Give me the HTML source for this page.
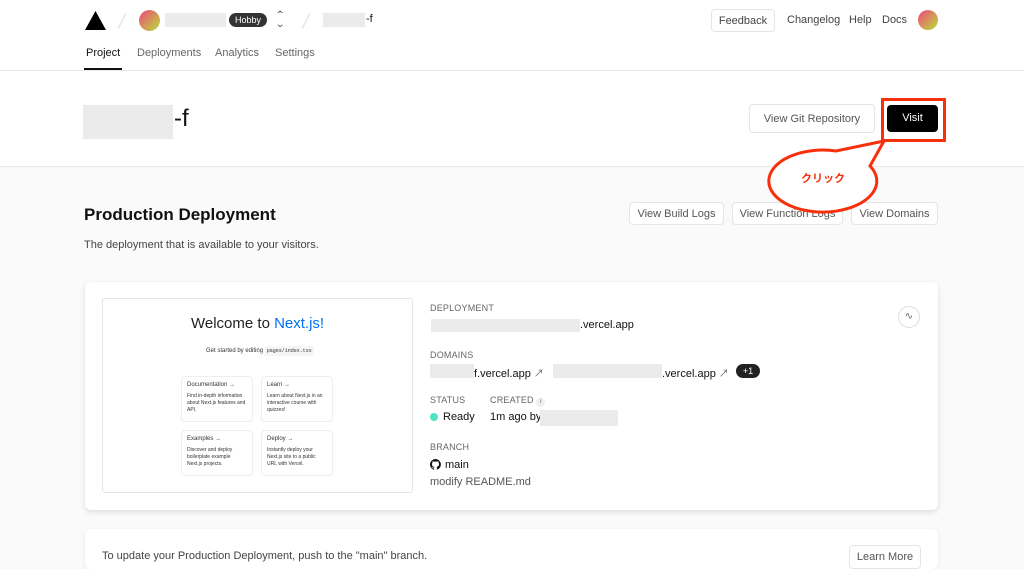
<!DOCTYPE html>
<html><head><meta charset="utf-8"><style>
*{box-sizing:border-box;margin:0;padding:0}
body{width:1024px;height:559px;overflow:hidden;background:#fafafa;font-family:"Liberation Sans","Noto Sans CJK JP",sans-serif;color:#111;position:relative}
.a{position:absolute}
.g{background:#ebebeb;position:absolute}
.btn{position:absolute;background:#fff;border:1px solid #e5e5e5;border-radius:4px;font-size:11px;color:#555;display:flex;align-items:center;justify-content:center}
.lab{position:absolute;font-size:9px;color:#666;letter-spacing:.2px}
.v{position:absolute;font-size:11px;color:#111}
.pc{position:absolute;border:1px solid #eee;border-radius:4px;font-size:5px;color:#333;padding:5px;line-height:7px}
.pc b{display:block;font-weight:normal;font-size:6px;margin-bottom:4px}
</style></head><body>
<div class="a" style="left:0;top:0;width:1024px;height:167px;background:#fff;border-bottom:1px solid #eaeaea"></div>
<div class="a" style="left:0;top:70px;width:1024px;height:1px;background:#eaeaea"></div>
<svg class="a" style="left:85px;top:11px" width="21" height="19"><polygon points="10.5,0 21,19 0,19" fill="#000"/></svg>
<svg class="a" style="left:116px;top:12px" width="12" height="18"><line x1="10" y1="1" x2="2" y2="17" stroke="#ddd"/></svg>
<div class="a" style="left:139px;top:10px;width:21px;height:21px;border-radius:50%;background:linear-gradient(135deg,#f0467c,#b8e03a)"></div>
<div class="g" style="left:165px;top:13px;width:61px;height:14px"></div>
<div class="a" style="left:229px;top:13px;width:38px;height:14px;border-radius:7px;background:#333;color:#fff;font-size:9px;text-align:center;line-height:14px">Hobby</div>
<div class="a" style="left:276px;top:11px;font-size:10px;color:#555;line-height:9px;transform:scaleX(1.2)">⌃<br>⌄</div>
<svg class="a" style="left:300px;top:12px" width="12" height="18"><line x1="10" y1="1" x2="2" y2="17" stroke="#ddd"/></svg>
<div class="g" style="left:323px;top:13px;width:42px;height:14px"></div>
<div class="a" style="left:366px;top:13px;font-size:11px">-f</div>
<div class="btn" style="left:711px;top:9px;width:64px;height:23px;color:#444">Feedback</div>
<div class="a" style="left:787px;top:14px;font-size:11px;color:#444">Changelog</div>
<div class="a" style="left:849px;top:14px;font-size:11px;color:#444">Help</div>
<div class="a" style="left:882px;top:14px;font-size:11px;color:#444">Docs</div>
<div class="a" style="left:918px;top:10px;width:20px;height:20px;border-radius:50%;background:linear-gradient(135deg,#f0467c,#b8e03a)"></div>
<div class="a" style="left:86px;top:47px;font-size:11px;color:#111">Project</div>
<div class="a" style="left:84px;top:68px;width:38px;height:2px;background:#111"></div>
<div class="a" style="left:137px;top:47px;font-size:11px;color:#666">Deployments</div>
<div class="a" style="left:215px;top:47px;font-size:11px;color:#666">Analytics</div>
<div class="a" style="left:275px;top:47px;font-size:11px;color:#666">Settings</div>
<div class="g" style="left:83px;top:105px;width:90px;height:34px"></div>
<div class="a" style="left:174px;top:105px;font-size:24px">-f</div>
<div class="btn" style="left:749px;top:104px;width:126px;height:29px;font-size:11px">View Git Repository</div>
<div class="a" style="left:887px;top:105px;width:51px;height:27px;background:#000;border-radius:4px;color:#fff;font-size:11px;text-align:center;line-height:27px">Visit</div>
<div class="a" style="left:881px;top:98px;width:65px;height:44px;border:3px solid #f7300c"></div>
<div class="a" style="left:84px;top:205px;font-size:17px;font-weight:bold">Production Deployment</div>
<div class="a" style="left:84px;top:239px;font-size:11px;color:#444">The deployment that is available to your visitors.</div>
<div class="btn" style="left:629px;top:202px;width:95px;height:23px">View Build Logs</div>
<div class="btn" style="left:732px;top:202px;width:111px;height:23px">View Function Logs</div>
<div class="btn" style="left:851px;top:202px;width:87px;height:23px">View Domains</div>
<svg class="a" style="left:0;top:0" width="1024" height="559" style="pointer-events:none"><path d="M 870 166 A 54 31 0 1 1 836 151 L 884 141 Z" fill="#fff" stroke="#f7300c" stroke-width="3" stroke-linejoin="miter"/></svg>
<div class="a" style="left:801px;top:170px;font-size:11px;font-weight:bold;color:#f7300c">クリック</div>
<div class="a" style="left:85px;top:282px;width:853px;height:228px;background:#fff;border-radius:6px;box-shadow:0 2px 6px rgba(0,0,0,.12)"></div>
<div class="a" style="left:102px;top:298px;width:311px;height:195px;border:1px solid #e5e5e5;border-radius:3px;background:#fff"></div>
<div class="a" style="left:191px;top:315px;font-size:15px;color:#222">Welcome to <span style="color:#0070f3">Next.js!</span></div>
<div class="a" style="left:206px;top:348px;font-size:6px;color:#333">Get started by editing <span style="background:#f5f5f5;font-family:'Liberation Mono',monospace;font-size:5px;padding:2px">pages/index.tsx</span></div>
<div class="pc" style="left:181px;top:376px;width:72px;height:46px"><b>Documentation →</b>Find in-depth information about Next.js features and API.</div>
<div class="pc" style="left:261px;top:376px;width:72px;height:46px"><b>Learn →</b>Learn about Next.js in an interactive course with quizzes!</div>
<div class="pc" style="left:181px;top:430px;width:72px;height:46px"><b>Examples →</b>Discover and deploy boilerplate example Next.js projects.</div>
<div class="pc" style="left:261px;top:430px;width:72px;height:46px"><b>Deploy →</b>Instantly deploy your Next.js site to a public URL with Vercel.</div>
<div class="lab" style="left:430px;top:303px">DEPLOYMENT</div>
<div class="g" style="left:431px;top:319px;width:149px;height:13px"></div>
<div class="v" style="left:580px;top:319px">.vercel.app</div>
<div class="a" style="left:898px;top:306px;width:22px;height:22px;border:1px solid #ddd;border-radius:50%;font-size:10px;color:#666;text-align:center;line-height:20px">∿</div>
<div class="lab" style="left:430px;top:350px">DOMAINS</div>
<div class="g" style="left:430px;top:364px;width:44px;height:14px"></div>
<div class="v" style="left:474px;top:365px">f.vercel.app <span style="color:#666;font-size:10px">↗</span></div>
<div class="g" style="left:553px;top:364px;width:109px;height:14px"></div>
<div class="v" style="left:662px;top:365px">.vercel.app <span style="color:#666;font-size:10px">↗</span></div>
<div class="a" style="left:736px;top:364px;width:24px;height:14px;border-radius:7px;background:#222;color:#fff;font-size:9px;text-align:center;line-height:14px">+1</div>
<div class="lab" style="left:430px;top:395px">STATUS</div>
<div class="lab" style="left:490px;top:395px">CREATED <span style="display:inline-block;width:9px;height:9px;border-radius:50%;background:#eee;font-size:6px;text-align:center;line-height:9px">i</span></div>
<div class="a" style="left:430px;top:413px;width:8px;height:8px;border-radius:50%;background:#50e3c2"></div>
<div class="v" style="left:443px;top:411px">Ready</div>
<div class="v" style="left:490px;top:411px">1m ago by</div>
<div class="g" style="left:540px;top:410px;width:78px;height:16px"></div>
<div class="lab" style="left:430px;top:442px">BRANCH</div>
<svg class="a" style="left:430px;top:459px" width="11" height="11" viewBox="0 0 16 16"><path fill="#111" d="M8 0a8 8 0 0 0-2.5 15.6c.4 0 .5-.2.5-.4v-1.5c-2.200.5-2.700-1-2.700-1-.4-.9-.9-1.200-.9-1.200-.7-.5.1-.5.1-.5.8.1 1.200.8 1.200.8.7 1.300 1.900.9 2.300.7.1-.5.3-.9.5-1.100-1.800-.2-3.600-.9-3.600-4 0-.9.3-1.600.8-2.100-.1-.2-.4-1 .1-2.100 0 0 .7-.2 2.200.8a7.600 7.600 0 0 1 4 0c1.500-1 2.200-.8 2.200-.8.4 1.100.2 1.900.1 2.100.5.6.8 1.300.8 2.100 0 3.100-1.900 3.800-3.600 4 .3.3.5.8.5 1.500v2.200c0 .2.1.5.6.4A8 8 0 0 0 8 0z"/></svg>
<div class="v" style="left:445px;top:459px">main</div>
<div class="v" style="left:430px;top:476px;color:#555">modify README.md</div>
<div class="a" style="left:85px;top:529px;width:853px;height:40px;background:#fff;border-radius:6px;box-shadow:0 1px 4px rgba(0,0,0,.08)"></div>
<div class="a" style="left:102px;top:550px;font-size:11px;color:#444">To update your Production Deployment, push to the "main" branch.</div>
<div class="btn" style="left:849px;top:545px;width:72px;height:24px">Learn More</div>
</body></html>
